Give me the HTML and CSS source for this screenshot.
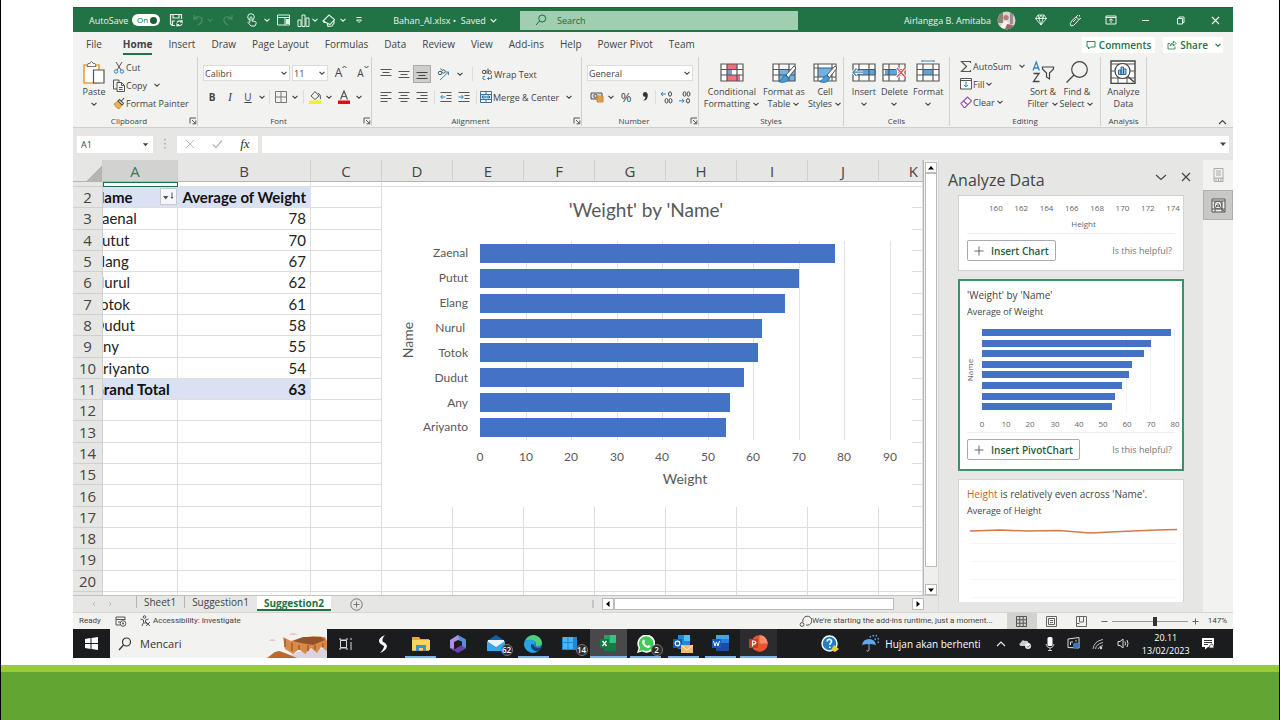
FILE: index.html
```html
<!DOCTYPE html>
<html lang="en">
<head>
<meta charset="utf-8">
<title>Bahan_AI.xlsx - Excel</title>
<link rel="stylesheet" href="styles.css">
</head>
<body>
<svg class="defs" aria-hidden="true">
  <symbol id="chev" viewBox="0 0 8 8"><path d="M1.5 2.8 4 5.2 6.5 2.8" fill="none" stroke="currentColor" stroke-width="1.1"/></symbol>
  <symbol id="launch" viewBox="0 0 8 8"><path d="M1 6.5V1H7M3 3 6.5 6.5M6.8 3.5V6.8H3.5" fill="none" stroke="#555" stroke-width="1"/></symbol>
  <symbol id="tri" viewBox="0 0 8 8"><path d="M1 2.5H7L4 6Z" fill="currentColor"/></symbol>
  <symbol id="gridicon" viewBox="0 0 24 20"><path d="M1 2H23V19H1Z" fill="#fff"/></symbol>
  <symbol id="gridlines" viewBox="0 0 24 20"><path d="M1 2H23V19H1ZM1 7.5H23M1 13H23M7 2V19M17 2V19" fill="none" stroke="#555" stroke-width="1.2"/></symbol>
  <symbol id="brush" viewBox="0 0 24 24"><path d="M22 6 14 15 16.5 17.5 24 8Z" fill="#fff" stroke="#555"/><path d="M13.5 15.5C10 15.5 11 20 6.5 21.5 11 23.5 16.5 22 16.5 18Z" fill="#4a9ad4" stroke="#2a6a9c" stroke-width=".8"/></symbol>
</svg>

<div class="window">
  <header class="titlebar">
    <div class="quick">
      <label for="autosave">AutoSave</label>
      <span class="toggle"><input type="checkbox" id="autosave" checked><span class="toggle-text">On</span><span class="knob"></span></span>
      <button aria-label="Save"><svg width="14" height="14" viewBox="0 0 14 14"><path d="M6 12.5H3L1.500 11V1.500H12.500V6M4 1.500V5H10V1.500M3.500 12V8H6M8 9.500A3 3 0 0 1 13 9V7M13 9H11M13 11A3 3 0 0 1 8 11.500V13.500M8 11.500H10" fill="none" stroke="#e4f2e9" stroke-width="1.200"/></svg></button>
      <button class="dim" aria-label="Undo"><svg width="12" height="12" viewBox="0 0 12 12"><path d="M2 1V5H6M2 5C5 1 11 3 10 7 9.500 9 8 10 6 11" fill="none" stroke="#fff" stroke-width="1.200"/></svg></button>
      <svg class="dim" width="8" height="8"><use href="#chev"/></svg>
      <button class="dim" aria-label="Redo"><svg width="12" height="12" viewBox="0 0 12 12"><path d="M10 1V5H6M10 5C7 1 1 3 2 7 2.500 9 4 10 6 11" fill="none" stroke="#fff" stroke-width="1.200"/></svg></button>
      <button aria-label="Touch mode"><svg width="12" height="14" viewBox="0 0 12 14"><circle cx="5" cy="4" r="3.300" fill="none" stroke="#e4f2e9"/><path d="M4 9V4.500Q5 3 6 4.500V8L9.500 8.500Q10.500 9 10 11L9 13H5L2 9.500Q2.500 8 4 9.500" fill="#217346" stroke="#e4f2e9"/></svg></button>
      <svg width="8" height="8"><use href="#chev"/></svg>
      <button aria-label="Pane"><svg width="13" height="12" viewBox="0 0 13 12"><path d="M.5 1H12.500V11H.500ZM.500 3.500H12.500M8 3.500V11" fill="none" stroke="#e4f2e9"/><path d="M9 5H12V10H9Z" fill="#e4f2e9"/></svg></button>
      <button aria-label="Chart"><svg width="13" height="13" viewBox="0 0 13 13"><path d="M1 12.500V6H4V12.500ZM5 12.500V1H8V12.500ZM9 12.500V4H12V12.500Z" fill="none" stroke="#e4f2e9"/></svg></button>
      <svg width="8" height="8"><use href="#chev"/></svg>
      <button aria-label="Shapes"><svg width="14" height="13" viewBox="0 0 14 13"><path d="M1 7 7 1 12.500 5.500 8 10.500 4 8.500ZM4 8.500H2V6M5 9 6 12.500 10 12 12 9V6" fill="none" stroke="#e4f2e9" stroke-width="1.100"/></svg></button>
      <svg width="8" height="8"><use href="#chev"/></svg>
      <button aria-label="Customize"><svg width="8" height="8" viewBox="0 0 8 8"><path d="M1.500 1.500H6.500M1.500 4 4 6.500 6.500 4Z" fill="none" stroke="#e4f2e9"/></svg></button>
    </div>
    <div class="doc-name">Bahan_AI.xlsx&nbsp;•&nbsp; Saved <svg width="9" height="9"><use href="#chev"/></svg></div>
    <label class="search"><svg width="12" height="12" viewBox="0 0 12 12"><circle cx="7.200" cy="4.500" r="3.500" fill="none" stroke="#1c6b3f"/><path d="M4.600 7 1 11" stroke="#1c6b3f"/></svg><input type="text" placeholder="Search" aria-label="Search"></label>
    <div class="account">
      <span>Airlangga B. Amitaba</span>
      <svg width="19" height="19" viewBox="0 0 19 19"><defs><clipPath id="av"><circle cx="9.500" cy="9.500" r="9"/></clipPath></defs><g clip-path="url(#av)"><path d="M0 0H19V19H0Z" fill="#dcd3d2"/><path d="M0 0H6V12H0Z" fill="#8f8078"/><path d="M13 2H16V13H13Z" fill="#9a8f90"/><circle cx="9" cy="6.500" r="2.600" fill="#b47f78"/><path d="M4 17Q5 10 9 10 12 10 13 17Z" fill="#f7f2f2"/><path d="M10 13 16 14 15 18H8Z" fill="#a1666a"/></g></svg>
    </div>
    <div class="win-buttons">
      <button aria-label="Premium"><svg width="12" height="12" viewBox="0 0 12 12"><path d="M3 1H9L11.500 4.500 6 11 .500 4.500ZM.500 4.500H11.500M3 1 4 4.500 6 11 8 4.500 9 1M4 4.500 6 1 8 4.500" fill="none" stroke="#e4f2e9" stroke-width=".9"/></svg></button>
      <button aria-label="Ink"><svg width="13" height="13" viewBox="0 0 13 13"><path d="M2 12Q0 10 3 6.500L7 3 10 5.500 7 9Q5 12 2 12ZM4 8 7 5M7 3 9 1M10 5.500 12 4M10.500 1V2.500" fill="none" stroke="#e4f2e9"/></svg></button>
      <button aria-label="Ribbon display"><svg width="12" height="10" viewBox="0 0 12 10"><path d="M1 1H11V9H1ZM1 2.500H11M6 8V4M4 5.500 6 3.800 8 5.500" fill="none" stroke="#e4f2e9"/></svg></button>
      <button aria-label="Minimize"><svg width="9" height="9" viewBox="0 0 9 9"><path d="M1 4.500H8" stroke="#e4f2e9"/></svg></button>
      <button aria-label="Restore"><svg width="9" height="9" viewBox="0 0 9 9"><path d="M1.500 2.500H6.500V8H1.500ZM3 2.500V1H8V6.500H6.500" fill="none" stroke="#e4f2e9"/></svg></button>
      <button aria-label="Close"><svg width="9" height="9" viewBox="0 0 9 9"><path d="M1 1 8 8M8 1 1 8" stroke="#fff" stroke-width="1.100"/></svg></button>
    </div>
  </header>

  <nav class="menu">
    <a href="#file" class="file">File</a><a href="#home" class="current">Home</a><a href="#insert">Insert</a><a href="#draw">Draw</a><a href="#layout">Page Layout</a><a href="#formulas">Formulas</a><a href="#data">Data</a><a href="#review">Review</a><a href="#view">View</a><a href="#addins">Add-ins</a><a href="#help">Help</a><a href="#pivot">Power Pivot</a><a href="#team">Team</a>
    <div class="menu-actions">
      <button><svg width="10" height="10" viewBox="0 0 10 10"><path d="M1 1.500H9V7H4.500L2.500 9V7H1Z" fill="none" stroke="#217346" stroke-width=".9"/></svg>Comments</button>
      <button class="share"><svg width="10" height="10" viewBox="0 0 10 10"><path d="M3 3.500H1V9H8V6.500M3 6Q3.500 3 6.500 3V1L9 3.500 6.500 6V4.500Q4.500 4.500 3 6Z" fill="none" stroke="#217346" stroke-width=".8"/></svg>Share<svg class="share-chev" width="8" height="8"><use href="#chev"/></svg></button>
    </div>
  </nav>

  <div class="ribbon">
    <section class="group g-clip">
      <div class="body clip">
        <button class="big"><svg width="24" height="24" viewBox="0 0 24 24"><path d="M2 5H17V23H2Z" fill="#fff" stroke="#e8a23d" stroke-width="1.600"/><path d="M5 6.500 6 3.500H8Q9.500-.5 11 3.500H13L14 6.500Z" fill="#fff" stroke="#777"/><path d="M11.500 10H22V23H11.500Z" fill="#fff" stroke="#555" stroke-width="1.200"/></svg>Paste<svg width="8" height="8"><use href="#chev"/></svg></button>
        <div class="stack">
          <button class="tool"><svg width="12" height="13" viewBox="0 0 12 13"><path d="M3 1 8 9M9 1 4 9" stroke="#555" fill="none"/><circle cx="3" cy="10.500" r="1.700" fill="none" stroke="#2f7fc1"/><circle cx="9" cy="10.500" r="1.700" fill="none" stroke="#2f7fc1"/></svg>Cut</button>
          <button class="tool"><svg width="12" height="13" viewBox="0 0 12 13"><path d="M4 10H.500V1H6V3M4 3.500H8.500L11.500 6.500V12.500H4ZM8.500 3.500V6.500H11.500M6 8.500H9.500M6 10.500H9.500" fill="none" stroke="#555"/></svg>Copy<svg class="push" width="8" height="8"><use href="#chev"/></svg></button>
          <button class="tool"><svg width="12" height="13" viewBox="0 0 12 13"><path d="M1 7 5 4 9 8 6 12Q3 11 1 7Z" fill="#f1b04c" stroke="#b87d25" stroke-width=".7"/><path d="M5 4 6.500 2.500 10.500 6.500 9 8ZM8.500 4 11 1" fill="#fff" stroke="#555" stroke-width="1.100"/></svg>Format Painter</button>
        </div>
      </div>
      <footer class="has-launch"><h2>Clipboard</h2><svg width="8" height="8"><use href="#launch"/></svg></footer>
    </section>

    <section class="group g-font">
      <div class="body rows">
        <div class="row font-1">
          <span class="combo"><select aria-label="Font"><option>Calibri</option></select><svg width="8" height="8"><use href="#chev"/></svg></span>
          <span class="combo"><select aria-label="Font size"><option>11</option></select><svg width="8" height="8"><use href="#chev"/></svg></span>
          <button class="grow" aria-label="Grow font">A<svg width="5" height="8" viewBox="0 0 5 8"><path d="M.5 3 2.500 1 4.500 3" fill="none" stroke="#444"/></svg></button>
          <button class="shrink" aria-label="Shrink font">A<svg width="5" height="8" viewBox="0 0 5 8"><path d="M.5 1 2.500 3 4.500 1" fill="none" stroke="#444"/></svg></button>
        </div>
        <div class="row font-2">
          <button class="glyph"><b>B</b></button><button class="glyph"><i>I</i></button><button class="glyph"><u>U</u></button><svg width="8" height="8"><use href="#chev"/></svg><hr>
          <button aria-label="Borders"><svg width="12" height="12" viewBox="0 0 12 12"><path d="M.5.500H11.500V11.500H.500ZM6 .500V11.500M.500 6H11.500" fill="none" stroke="#777"/></svg></button><svg width="8" height="8"><use href="#chev"/></svg><hr>
          <button aria-label="Fill color"><svg width="14" height="14" viewBox="0 0 14 14"><path d="M3 6 7 1.500 11 6 7 9.500ZM10 3Q13 4 12.500 9" fill="none" stroke="#555"/><path d="M1 10.500H13V14H1Z" fill="#f8f018"/></svg></button><svg width="8" height="8"><use href="#chev"/></svg>
          <button aria-label="Font color"><svg width="14" height="14" viewBox="0 0 14 14"><path d="M3.500 9.500 7 1 10.500 9.500M4.800 6.500H9.200" fill="none" stroke="#555" stroke-width="1.200"/><path d="M1 10.500H13V14H1Z" fill="#d9101c"/></svg></button><svg width="8" height="8"><use href="#chev"/></svg>
        </div>
      </div>
      <footer class="has-launch"><h2>Font</h2><svg width="8" height="8"><use href="#launch"/></svg></footer>
    </section>

    <section class="group g-align">
      <div class="body rows">
        <div class="row align-1">
          <button aria-label="Top align"><svg width="12" height="12" viewBox="0 0 12 12"><path d="M.5 1.500H11.500M2.500 4.500H9.500M.500 7.500H11.500" stroke="#555"/></svg></button>
          <button aria-label="Middle align"><svg width="12" height="12" viewBox="0 0 12 12"><path d="M.5 3.500H11.500M2.500 6.500H9.500M.500 9.500H11.500" stroke="#555"/></svg></button>
          <button class="pressed" aria-label="Bottom align"><svg width="12" height="12" viewBox="0 0 12 12"><path d="M.5 4.500H11.500M2.500 7.500H9.500M.500 10.500H11.500" stroke="#444"/></svg></button>
          <button aria-label="Orientation"><svg width="13" height="13" viewBox="0 0 13 13"><circle cx="3" cy="5" r="1.700" fill="none" stroke="#555"/><circle cx="6.500" cy="3.500" r="1.700" fill="none" stroke="#555"/><path d="M5 2 3 .500M4.500 6.500V4M3 12 11.500 4M8.500 4H11.500V7" fill="none" stroke="#3b87bd"/></svg></button>
          <svg width="8" height="8"><use href="#chev"/></svg><hr>
          <button class="tool"><svg width="12" height="13" viewBox="0 0 12 13"><circle cx="3" cy="4" r="1.700" fill="none" stroke="#555"/><path d="M5 2V6M7 .500V6" stroke="#555"/><circle cx="8.800" cy="4.300" r="1.600" fill="none" stroke="#555"/><path d="M4 8Q1 8 2 11 3 12 4.500 11.500M10.500 7V10.500H6.500M8 9 6.500 10.500 8 12" fill="none" stroke="#3b87bd"/></svg>Wrap Text</button>
        </div>
        <div class="row align-2">
          <button aria-label="Align left"><svg width="12" height="12" viewBox="0 0 12 12"><path d="M.5 1.500H11.500M.500 4.500H7.500M.500 7.500H11.500M.500 10.500H7.500" stroke="#555"/></svg></button>
          <button aria-label="Center"><svg width="12" height="12" viewBox="0 0 12 12"><path d="M.5 1.500H11.500M2.500 4.500H9.500M.500 7.500H11.500M2.500 10.500H9.500" stroke="#555"/></svg></button>
          <button aria-label="Align right"><svg width="12" height="12" viewBox="0 0 12 12"><path d="M.5 1.500H11.500M4.500 4.500H11.500M.500 7.500H11.500M4.500 10.500H11.500" stroke="#555"/></svg></button><hr>
          <button aria-label="Decrease indent"><svg width="12" height="12" viewBox="0 0 12 12"><path d="M.5 1.500H11.500M6.500 4.500H11.500M6.500 7.500H11.500M.500 10.500H11.500" stroke="#555"/><path d="M5.500 6H.800M2.500 4 .800 6 2.500 8" fill="none" stroke="#2f86c9"/></svg></button>
          <button aria-label="Increase indent"><svg width="12" height="12" viewBox="0 0 12 12"><path d="M.5 1.500H11.500M6.500 4.500H11.500M6.500 7.500H11.500M.500 10.500H11.500" stroke="#555"/><path d="M.5 6H5.200M3.500 4 5.200 6 3.500 8" fill="none" stroke="#2f86c9"/></svg></button><hr>
          <button class="tool"><svg width="12" height="12" viewBox="0 0 12 12"><path d="M.5.500H11.500V11.500H.500Z" fill="#fff" stroke="#44718f"/><path d="M.5 3.500H11.500V8.500H.500Z" fill="#bfe0f5" stroke="#44718f"/><path d="M6 .5V3.500M6 8.500V11.500" stroke="#44718f"/><path d="M2 6H10M3.500 4.700 2 6 3.500 7.300M8.500 4.700 10 6 8.500 7.300" fill="none" stroke="#1c6fae"/></svg>Merge &amp; Center</button><svg width="8" height="8"><use href="#chev"/></svg>
        </div>
      </div>
      <footer class="has-launch"><h2>Alignment</h2><svg width="8" height="8"><use href="#launch"/></svg></footer>
    </section>

    <section class="group g-num">
      <div class="body rows">
        <div class="row num-1"><span class="combo"><select aria-label="Number format"><option>General</option></select><svg width="8" height="8"><use href="#chev"/></svg></span></div>
        <div class="row num-2">
          <button aria-label="Currency"><svg width="14" height="12" viewBox="0 0 14 12"><path d="M1 2H12V8H1Z" fill="#ddd" stroke="#555"/><circle cx="5.500" cy="5" r="1.700" fill="none" stroke="#555"/><path d="M7 5H13V11H7Z" fill="#efb45e" stroke="#b9782a" stroke-width=".8"/><path d="M7 7H13M7 9H13" stroke="#b9782a" stroke-width=".7"/></svg></button><svg width="8" height="8"><use href="#chev"/></svg>
          <button class="pct">%</button>
          <button aria-label="Comma style"><svg width="8" height="12" viewBox="0 0 8 12"><path d="M4 1A2.400 2.400 0 1 0 4.500 5.800Q4.500 8.500 2 9.500 7 9.500 6.800 4 6.500 1 4 1Z" fill="#333"/></svg></button><hr>
          <button class="dec" aria-label="Increase decimal"><svg width="13" height="13" viewBox="0 0 13 13"><path d="M6 3H1M3 1 1 3 3 5" fill="none" stroke="#2f86c9"/><g fill="none" stroke="#444"><ellipse cx="10" cy="3" rx="1.500" ry="2.200"/><ellipse cx="6.500" cy="9.800" rx="1.500" ry="2.200"/><ellipse cx="10.500" cy="9.800" rx="1.500" ry="2.200"/></g></svg></button>
          <button class="dec" aria-label="Decrease decimal"><svg width="13" height="13" viewBox="0 0 13 13"><path d="M1 9.800H6M4 7.800 6 9.800 4 11.800" fill="none" stroke="#2f86c9"/><g fill="none" stroke="#444"><ellipse cx="6.500" cy="3" rx="1.500" ry="2.200"/><ellipse cx="10.500" cy="3" rx="1.500" ry="2.200"/><ellipse cx="10" cy="9.800" rx="1.500" ry="2.200"/></g></svg></button>
        </div>
      </div>
      <footer class="has-launch"><h2>Number</h2><svg width="8" height="8"><use href="#launch"/></svg></footer>
    </section>

    <section class="group g-styles">
      <div class="body bigs">
        <button class="big"><svg width="24" height="24" viewBox="0 0 24 24"><use href="#gridicon" y="2" width="24" height="20"/><path d="M7 4H17V9H7ZM7 15H20V21H7Z" fill="#f0717b"/><path d="M7 9H12V15H7Z" fill="#7a9fd0"/><use href="#gridlines" y="2" width="24" height="20"/></svg>Conditional<span>Formatting <svg width="8" height="8"><use href="#chev"/></svg></span></button>
        <button class="big"><svg width="24" height="24" viewBox="0 0 24 24"><use href="#gridicon" y="2" width="24" height="20"/><path d="M7 9H23V21H7Z" fill="#6fb4e6"/><use href="#gridlines" y="2" width="24" height="20"/><use href="#brush" width="24" height="24"/></svg>Format as<span>Table <svg width="8" height="8"><use href="#chev"/></svg></span></button>
        <button class="big"><svg width="24" height="24" viewBox="0 0 24 24"><use href="#gridicon" y="2" width="24" height="20"/><path d="M5 8H19V17H5Z" fill="#6fb4e6"/><path d="M1 4H23V21H1ZM1 8H23M5 4V21M19 4V21M1 17H23" fill="none" stroke="#555" stroke-width="1.100"/><use href="#brush" width="24" height="24"/></svg>Cell<span>Styles <svg width="8" height="8"><use href="#chev"/></svg></span></button>
      </div>
      <footer><h2>Styles</h2></footer>
    </section>

    <section class="group g-cells">
      <div class="body bigs">
        <button class="big"><svg width="24" height="24" viewBox="0 0 24 24"><use href="#gridicon" y="2" width="24" height="20"/><path d="M5 9.500H24V15H5Z" fill="#58a6dd"/><use href="#gridlines" y="2" width="24" height="20"/><path d="M11 12.200H1M4.500 8.500 1 12.200 4.500 16" fill="none" stroke="#fff" stroke-width="3"/><path d="M11 12.200H1M4.500 8.500 1 12.200 4.500 16" fill="none" stroke="#3b8cc7" stroke-width="1.300"/></svg>Insert<svg width="8" height="8"><use href="#chev"/></svg></button>
        <button class="big"><svg width="24" height="24" viewBox="0 0 24 24"><use href="#gridicon" y="2" width="24" height="20"/><path d="M3 9.500H15V15H3Z" fill="#58a6dd"/><use href="#gridlines" y="2" width="24" height="20"/><path d="M15 8 23 17M23 8 15 17" stroke="#fff" stroke-width="3"/><path d="M15 8 23 17M23 8 15 17" stroke="#e0505a" stroke-width="1.500"/></svg>Delete<svg width="8" height="8"><use href="#chev"/></svg></button>
        <button class="big"><svg width="24" height="24" viewBox="0 0 24 24"><use href="#gridicon" y="2" width="24" height="20"/><path d="M7 9.500H17V15H7Z" fill="#58a6dd"/><use href="#gridlines" y="2" width="24" height="20"/><path d="M6 1H18M6 0V2M18 0V2" stroke="#3b8cc7" stroke-width="1"/></svg>Format<svg width="8" height="8"><use href="#chev"/></svg></button>
      </div>
      <footer><h2>Cells</h2></footer>
    </section>

    <section class="group g-edit">
      <div class="body edit">
        <div class="stack">
          <button class="tool"><svg width="12" height="13" viewBox="0 0 12 13"><path d="M10.500 3V1.500H1.500L6.500 6.500 1.500 11.500H10.500V10" fill="none" stroke="#555" stroke-width="1.200"/></svg>AutoSum<svg class="push" width="8" height="8"><use href="#chev"/></svg></button>
          <button class="tool"><svg width="12" height="12" viewBox="0 0 12 12"><path d="M.5.500H11.500V11H.500ZM.500 2.500H11.500" fill="#fff" stroke="#555"/><path d="M6 3.500V9M4 7 6 9 8 7" fill="none" stroke="#2f86c9"/></svg>Fill<svg width="8" height="8"><use href="#chev"/></svg></button>
          <button class="tool"><svg width="12" height="12" viewBox="0 0 12 12"><path d="M1 7.500 7.500 1 11.500 5 5 11.500H4ZM3.500 5 8 9" fill="#fff" stroke="#9a4bb0" stroke-width="1.100"/></svg>Clear<svg width="8" height="8"><use href="#chev"/></svg></button>
        </div>
        <button class="big"><svg width="24" height="24" viewBox="0 0 24 24"><path d="M2 10.500 5.200 2 8.400 10.500M3.200 8H7.200" fill="none" stroke="#2f86c9" stroke-width="1.300"/><path d="M2.500 13.500H8L2.500 21.500H8.500" fill="none" stroke="#444" stroke-width="1.300"/><path d="M11.500 7H22.500V9L18.500 13V19L15.500 17V13L11.500 9Z" fill="none" stroke="#444" stroke-width="1.200"/></svg>Sort &amp;<span>Filter <svg width="8" height="8"><use href="#chev"/></svg></span></button>
        <button class="big"><svg width="24" height="24" viewBox="0 0 24 24"><circle cx="14.500" cy="9.500" r="7.800" fill="none" stroke="#444" stroke-width="1.200"/><path d="M9 15 1.500 22.500" stroke="#444" stroke-width="1.200"/></svg>Find &amp;<span>Select <svg width="8" height="8"><use href="#chev"/></svg></span></button>
      </div>
      <footer><h2>Editing</h2></footer>
    </section>

    <section class="group g-analysis">
      <div class="body bigs">
        <button class="big"><svg width="26" height="24" viewBox="0 0 26 24"><path d="M1 1H25V23.500H1Z" fill="#fff" stroke="#444" stroke-width="1.400"/><path d="M1 4H25M1 18H25M1 11H25M8 4V23.500M17 4V23.500" stroke="#555"/><circle cx="12.500" cy="11" r="7.500" fill="#fff" stroke="#444" stroke-width="1.200"/><path d="M18 16.500 24 22" stroke="#444" stroke-width="1.500"/><path d="M8.500 14.500V10H11V14.500ZM11 14.500V7H13.500V14.500ZM13.500 14.500V9H16V14.500Z" fill="#8ec3ea" stroke="#2a5e8c" stroke-width=".9"/></svg>Analyze<span>Data</span></button>
      </div>
      <footer><h2>Analysis</h2></footer>
    </section>
    <button class="collapse" aria-label="Collapse ribbon"><svg width="9" height="8" viewBox="0 0 9 8"><path d="M1 6 4.500 2.500 8 6" fill="none" stroke="#444" stroke-width="1.100"/></svg></button>
  </div>

  <div class="formula-bar">
    <span class="name-box"><input type="text" value="A1" aria-label="Name box"><svg width="7" height="7"><use href="#tri"/></svg></span>
    <svg class="dots" width="4" height="12" viewBox="0 0 4 12"><path d="M1 1H3V2.500H1ZM1 5H3V6.500H1ZM1 9H3V10.500H1Z" fill="#b5b5b3"/></svg>
    <div class="fx">
      <button aria-label="Cancel"><svg width="10" height="10" viewBox="0 0 10 10"><path d="M1 1 9 9M9 1 1 9" stroke="#bbb"/></svg></button>
      <button aria-label="Enter"><svg width="11" height="10" viewBox="0 0 11 10"><path d="M1 5.500 4 8.500 10 1.500" fill="none" stroke="#b5b5b3" stroke-width="1.200"/></svg></button>
      <button class="fx-label">fx</button>
    </div>
    <div class="formula"><input type="text" aria-label="Formula"><svg width="8" height="8"><use href="#tri"/></svg></div>
  </div>

  <main class="main">
    <div class="sheet">
      <div class="grid-area">
        <div class="grid">
          <table>
            <colgroup><col class="c-head"><col class="c-a"><col class="c-b"><col class="c-n"><col class="c-n"><col class="c-n"><col class="c-n"><col class="c-n"><col class="c-n"><col class="c-n"><col class="c-n"><col></colgroup>
            <thead><tr><th class="corner"></th><th class="sel">A</th><th>B</th><th>C</th><th>D</th><th>E</th><th>F</th><th>G</th><th>H</th><th>I</th><th>J</th><th class="k">K</th></tr></thead>
            <tbody>
              <tr class="first"><th></th><td class="active"></td><td></td><td></td><td colspan="8"></td></tr>
              <tr class="band"><th>2</th><td><span class="shift">Name</span><button class="filter" aria-label="Sort and filter"><svg width="13" height="12" viewBox="0 0 13 12"><path d="M1 5H6.500L3.700 8.500ZM8.500 6H11.500L10 8Z" fill="#555"/><path d="M10 1.500V7" stroke="#555"/></svg></button></td><td class="num">Average of Weight</td><td></td><td></td><td></td><td></td><td></td><td></td><td></td><td></td><td></td></tr>
              <tr><th>3</th><td><span class="shift">Zaenal</span></td><td class="num">78</td><td></td><td></td><td></td><td></td><td></td><td></td><td></td><td></td><td></td></tr>
              <tr><th>4</th><td><span class="shift">Putut</span></td><td class="num">70</td><td></td><td></td><td></td><td></td><td></td><td></td><td></td><td></td><td></td></tr>
              <tr><th>5</th><td><span class="shift">Elang</span></td><td class="num">67</td><td></td><td></td><td></td><td></td><td></td><td></td><td></td><td></td><td></td></tr>
              <tr><th>6</th><td><span class="shift">Nurul</span></td><td class="num">62</td><td></td><td></td><td></td><td></td><td></td><td></td><td></td><td></td><td></td></tr>
              <tr><th>7</th><td><span class="shift">Totok</span></td><td class="num">61</td><td></td><td></td><td></td><td></td><td></td><td></td><td></td><td></td><td></td></tr>
              <tr><th>8</th><td><span class="shift">Dudut</span></td><td class="num">58</td><td></td><td></td><td></td><td></td><td></td><td></td><td></td><td></td><td></td></tr>
              <tr><th>9</th><td><span class="shift">Any</span></td><td class="num">55</td><td></td><td></td><td></td><td></td><td></td><td></td><td></td><td></td><td></td></tr>
              <tr><th>10</th><td><span class="shift">Ariyanto</span></td><td class="num">54</td><td></td><td></td><td></td><td></td><td></td><td></td><td></td><td></td><td></td></tr>
              <tr class="band"><th>11</th><td><span class="shift">Grand Total</span></td><td class="num">63</td><td></td><td></td><td></td><td></td><td></td><td></td><td></td><td></td><td></td></tr>
              <tr><th>12</th><td></td><td></td><td></td><td></td><td></td><td></td><td></td><td></td><td></td><td></td><td></td></tr>
              <tr><th>13</th><td></td><td></td><td></td><td></td><td></td><td></td><td></td><td></td><td></td><td></td><td></td></tr>
              <tr><th>14</th><td></td><td></td><td></td><td></td><td></td><td></td><td></td><td></td><td></td><td></td><td></td></tr>
              <tr><th>15</th><td></td><td></td><td></td><td></td><td></td><td></td><td></td><td></td><td></td><td></td><td></td></tr>
              <tr><th>16</th><td></td><td></td><td></td><td></td><td></td><td></td><td></td><td></td><td></td><td></td><td></td></tr>
              <tr><th>17</th><td></td><td></td><td></td><td></td><td></td><td></td><td></td><td></td><td></td><td></td><td></td></tr>
              <tr><th>18</th><td></td><td></td><td></td><td></td><td></td><td></td><td></td><td></td><td></td><td></td><td></td></tr>
              <tr><th>19</th><td></td><td></td><td></td><td></td><td></td><td></td><td></td><td></td><td></td><td></td><td></td></tr>
              <tr><th>20</th><td></td><td></td><td></td><td></td><td></td><td></td><td></td><td></td><td></td><td></td><td></td></tr>
              <tr class="last"><th></th><td></td><td></td><td></td><td></td><td></td><td></td><td></td><td></td><td></td><td></td><td></td></tr>
            </tbody>
          </table>
          <svg class="chart" width="530" height="320" viewBox="0 0 530 320">
            <path d="M144.500 54V253M189.500 54V253M235.500 54V253M280.500 54V253M326.500 54V253M371.500 54V253M417.500 54V253M462.500 54V253M508.500 54V253" stroke="#e2e2e2"/>
            <text class="ch-title" x="264" y="30" text-anchor="middle">'Weight' by 'Name'</text>
            <g fill="#4472c4"><rect x="98" y="57" width="355" height="19"/><rect x="98" y="82" width="319" height="19"/><rect x="98" y="107" width="305" height="19"/><rect x="98" y="132" width="282" height="19"/><rect x="98" y="156" width="278" height="19"/><rect x="98" y="181" width="264" height="19"/><rect x="98" y="206" width="250" height="19"/><rect x="98" y="231" width="246" height="19"/></g>
            <g class="ch-label" text-anchor="end"><text x="86" y="70">Zaenal</text><text x="86" y="95">Putut</text><text x="86" y="120">Elang</text><text x="83" y="145">Nurul</text><text x="86" y="170">Totok</text><text x="86" y="195">Dudut</text><text x="86" y="220">Any</text><text x="86" y="244">Ariyanto</text></g>
            <g class="ch-label" text-anchor="middle"><text x="98" y="274">0</text><text x="144" y="274">10</text><text x="189" y="274">20</text><text x="235" y="274">30</text><text x="280" y="274">40</text><text x="326" y="274">50</text><text x="371" y="274">60</text><text x="417" y="274">70</text><text x="462" y="274">80</text><text x="508" y="274">90</text></g>
            <text class="ch-axis" x="303" y="297" text-anchor="middle">Weight</text>
            <text class="ch-axis" transform="translate(31 153) rotate(-90)" text-anchor="middle">Name</text>
          </svg>
        </div>
        <div class="vscroll"><button aria-label="Scroll up"><svg width="8" height="8" viewBox="0 0 8 8"><path d="M1 5.500 4 2 7 5.500Z"/></svg></button><span class="thumb"></span><button aria-label="Scroll down"><svg width="8" height="8" viewBox="0 0 8 8"><path d="M1 2.500 4 6 7 2.500Z"/></svg></button></div>
      </div>
      <div class="tabs">
        <svg class="tab-nav" width="24" height="8" viewBox="0 0 24 8"><path d="M5 2 3 4 5 6M19 2 21 4 19 6" fill="none" stroke="#b9b9b7"/></svg>
        <button class="tab">Sheet1</button><button class="tab">Suggestion1</button><button class="tab on">Suggestion2</button>
        <button class="add" aria-label="New sheet"><svg width="13" height="13" viewBox="0 0 13 13"><circle cx="6.500" cy="6.500" r="5.700" fill="none" stroke="#777"/><path d="M6.500 3.500V9.500M3.500 6.500H9.500" stroke="#777"/></svg></button>
        <span class="split"></span>
        <div class="hscroll"><button aria-label="Scroll left"><svg width="8" height="8" viewBox="0 0 8 8"><path d="M5.500 1 2 4 5.500 7Z"/></svg></button><span class="thumb"></span><button aria-label="Scroll right"><svg width="8" height="8" viewBox="0 0 8 8"><path d="M2.500 1 6 4 2.500 7Z"/></svg></button></div>
      </div>
    </div>

    <aside class="pane">
      <header><h1>Analyze Data</h1><button aria-label="Options"><svg width="12" height="12" viewBox="0 0 12 12"><path d="M1 4 6 8.500 11 4" fill="none" stroke="#444" stroke-width="1.100"/></svg></button><button aria-label="Close pane"><svg width="10" height="10" viewBox="0 0 10 10"><path d="M1 1 9 9M9 1 1 9" stroke="#444" stroke-width="1.200"/></svg></button></header>
      <div class="cards">
        <article class="card top">
          <div class="ticks"><span>160</span><span>162</span><span>164</span><span>166</span><span>168</span><span>170</span><span>172</span><span>174</span></div>
          <p class="axis">Height</p>
          <div class="actions"><button class="insert"><svg width="10" height="10" viewBox="0 0 10 10"><path d="M5 .5V9.500M.500 5H9.500" stroke="#666"/></svg>Insert Chart</button><a href="#helpful">Is this helpful?</a></div>
        </article>
        <article class="card chosen">
          <h3>'Weight' by 'Name'</h3>
          <p>Average of Weight</p>
          <svg class="mini" viewBox="0 0 216 110">
            <path d="M159.500 6V90M183.500 6V90M207.500 6V90" stroke="#f2f2f2"/>
            <g fill="#4472c4"><rect x="15" y="7" width="189" height="7"/><rect x="15" y="18" width="169" height="7"/><rect x="15" y="28" width="162" height="7"/><rect x="15" y="39" width="150" height="7"/><rect x="15" y="49" width="147" height="7"/><rect x="15" y="60" width="140" height="7"/><rect x="15" y="71" width="133" height="7"/><rect x="15" y="81" width="130" height="7"/></g>
            <g text-anchor="middle"><text x="15" y="105">0</text><text x="39" y="105">10</text><text x="63" y="105">20</text><text x="88" y="105">30</text><text x="112" y="105">40</text><text x="136" y="105">50</text><text x="160" y="105">60</text><text x="184" y="105">70</text><text x="208" y="105">80</text><text transform="translate(6 48) rotate(-90)">Name</text></g>
          </svg>
          <div class="actions"><button class="insert"><svg width="10" height="10" viewBox="0 0 10 10"><path d="M5 .5V9.500M.500 5H9.500" stroke="#666"/></svg>Insert PivotChart</button><a href="#helpful2">Is this helpful?</a></div>
        </article>
        <article class="card even">
          <h3><em>Height</em> is relatively even across 'Name'.</h3>
          <p>Average of Height</p>
          <svg class="mini" viewBox="0 0 216 80"><path d="M3 22.500H210M3 40.500H210M3 58.500H210M3 76.500H210" stroke="#f6f6f4"/><path d="M3 10 33 9 60 10 92 9.500 123 12 165 10 190 9 210 8.500" fill="none" stroke="#d5794b" stroke-width="1.500"/></svg>
        </article>
      </div>
    </aside>
    <div class="rail">
      <button aria-label="Notes"><svg width="11" height="14" viewBox="0 0 11 14"><path d="M1 .5H10V13.500H1ZM1 10H10M3 3H8M3 5H8M3 7H8M3 10V13M5.500 10V13M8 10V13" fill="none" stroke="#aaa"/></svg></button>
      <button class="on" aria-label="Analyze Data"><svg width="15" height="15" viewBox="0 0 15 15"><path d="M1 1H14V14H1ZM1 3H14M1 11H14M4 3V14M11 3V14" fill="#eee" stroke="#555"/><circle cx="7" cy="7" r="3.800" fill="#eee" stroke="#555"/><path d="M10 10 14 14M5.500 9V7M7 9V5M8.500 9V6.500" stroke="#555"/></svg></button>
    </div>
  </main>

  <div class="status">
    <span class="ready">Ready</span>
    <svg width="12" height="11" viewBox="0 0 12 11"><path d="M1 1H10V4M1 1V9H5M1 3.500H10M3 6H5" fill="none" stroke="#555"/><circle cx="8" cy="7.500" r="2.800" fill="none" stroke="#555"/><circle cx="8" cy="7.500" r="1" fill="#555"/></svg>
    <span class="access"><svg width="11" height="12" viewBox="0 0 11 12"><circle cx="4.500" cy="2" r="1.300" fill="none" stroke="#555"/><path d="M.5 4 3.500 5V7.500L2 11M8.500 4 5.500 5V7L7 9M3.500 8H5.500M6 7 10 11M10 7 6 11" fill="none" stroke="#555"/></svg>Accessibility: Investigate</span>
    <span class="starting"><svg width="13" height="12" viewBox="0 0 13 12"><path d="M4 7A4.500 4.500 0 1 1 7 10" fill="none" stroke="#555"/><circle cx="3" cy="9.500" r="1.900" fill="none" stroke="#555"/></svg>We're starting the add-ins runtime, just a moment...</span>
    <div class="views">
      <button class="on" aria-label="Normal view"><svg width="11" height="11" viewBox="0 0 11 11"><path d="M.5.500H10.500V10.500H.500ZM.500 3.800H10.500M.500 7.200H10.500M3.800.500V10.500M7.200.500V10.500" fill="none" stroke="#555"/></svg></button>
      <button aria-label="Page layout view"><svg width="11" height="11" viewBox="0 0 11 11"><path d="M.5.500H10.500V10.500H.500ZM2.500 2.500H8.500V8.500H2.500ZM4 4.500H7M4 6.500H7" fill="none" stroke="#666"/></svg></button>
      <button aria-label="Page break view"><svg width="11" height="11" viewBox="0 0 11 11"><path d="M.5.500H10.500V10.500H.500ZM3.500.500V6H7.500V.500M.500 7.500H3.500" fill="none" stroke="#666"/></svg></button>
    </div>
    <div class="zoom"><button aria-label="Zoom out"><svg width="7" height="7" viewBox="0 0 7 7"><path d="M.5 3.500H6.500" stroke="#666"/></svg></button><input type="range" min="0" max="100" value="58" aria-label="Zoom"><button aria-label="Zoom in"><svg width="7" height="7" viewBox="0 0 7 7"><path d="M.5 3.500H6.500M3.500.500V6.500" stroke="#666"/></svg></button><span>147%</span></div>
  </div>

  <div class="taskbar">
    <button class="start" aria-label="Start"><svg width="13" height="13" viewBox="0 0 13 13"><path d="M0 2 5.500 1V6H0ZM6.500 1 13 0V6H6.500ZM0 7H5.500V12L0 11ZM6.500 7H13V13L6.500 12Z" fill="#fff"/></svg></button>
    <label class="task-search"><svg width="14" height="14" viewBox="0 0 14 14"><circle cx="8.500" cy="5" r="4" fill="none" stroke="#333" stroke-width="1.200"/><path d="M5.500 8 1 13" stroke="#333" stroke-width="1.200"/></svg><input type="text" placeholder="Mencari" aria-label="Mencari">
      <svg width="60" height="27" viewBox="0 0 60 27"><path d="M20 27Q30 17 60 18V27Z" fill="#d9d3e4"/><path d="M0 27 8 21 12 20 18 22 30 27Z" fill="#b8692b"/><path d="M16 6 24 10 34 7 46 5 58 6 60 10V20L54 16 50 22 44 17 38 23 32 18 26 23 18 18Z" fill="#d98a4a"/><path d="M26 10 36 6 54 6 58 9 46 14 34 12Z" fill="#93532a"/><path d="M18 8V16M25 12V20M32 14V19M41 14V20M48 14V19M56 12V16" stroke="#a45f2d" stroke-width="1.500"/><path d="M2 10Q5 6 9 10ZM22 4Q26 0 31 4Z" fill="#e9c7c7"/></svg></label>
    <div class="apps">
      <button aria-label="Task view"><svg width="14" height="14" viewBox="0 0 14 14"><path d="M1 1V3H8V1M1 13V11H8V13M1.500 3.500H7.500V10.500H1.500ZM12 1V3M12 5V13" fill="none" stroke="#ddd"/></svg></button>
      <button aria-label="Shortcut"><svg width="12" height="18" viewBox="0 0 12 18"><path d="M8 0Q1 3 2 7 3 9 7 11 7 14 3 18 10 15 10 10.500 9 8 5.500 6.500 5 3 8 0Z" fill="#fff"/></svg></button>
      <button class="run" aria-label="File Explorer"><svg width="18" height="16" viewBox="0 0 18 16"><path d="M0 1H7L8.500 3H17V15H0Z" fill="#e9a92b"/><path d="M0 4H18V14H0Z" fill="#fbd45f"/><path d="M4 9H14V15H11V12H7V15H4Z" fill="#3f8fd6"/></svg></button>
      <button aria-label="Microsoft 365"><svg width="18" height="18" viewBox="0 0 18 18"><path d="M9 0 17 4.500V13L13 15.500V6.500L6 4Z" fill="#4f8fe0"/><path d="M9 0 1 5V13L5 15.500V7L10 4.500Z" fill="#b08fe8"/><path d="M1 13 9 18 17 13 12 10.500 6 14Z" fill="#6a3fb5"/></svg></button>
      <button aria-label="Mail"><svg width="18" height="17" viewBox="0 0 18 17"><path d="M0 6 9 0 18 6V16H0Z" fill="#1262a8"/><path d="M1 5H17V12H1Z" fill="#e9f5fd"/><path d="M0 6 9 12 18 6V16H0Z" fill="#3aa7e8"/></svg><span class="count">62</span></button>
      <button class="run" aria-label="Edge"><svg width="18" height="18" viewBox="0 0 18 18"><circle cx="9" cy="9" r="9" fill="#1c7cd0"/><path d="M1 6Q4 0 10 0 17 1 18 8 17 12 12 11 13 6 8 5 4 4 1 6Z" fill="#4ed07a"/><path d="M0 9Q2 4 8 5 12 7 11 9 9 8 8 10 7 15 14 16 9 19 4 16 0 13 0 9Z" fill="#26a5e4"/><path d="M7 9Q6 15 13 16.500 16 15.500 17 12.500 11 14 9.500 10Z" fill="#123f74"/></svg></button>
      <button aria-label="Phone"><svg width="17" height="16" viewBox="0 0 17 16"><path d="M0 1H15V14H0Z" fill="#1c86d8"/><path d="M1 1H5.500V6H1ZM6.500 1H11V6H6.500ZM1 7H5.500V13H1ZM6.500 7H11V13H6.500Z" fill="#49b5f4"/></svg><span class="count">14</span></button>
      <button class="run active" aria-label="Excel"><svg width="17" height="17" viewBox="0 0 17 17"><path d="M4 0H16V16H4Z" fill="#1fa463"/><path d="M10 0H16V8H10Z" fill="#33c481"/><path d="M4 8H16V16H4Z" fill="#157a43"/><path d="M0 4H9V13H0Z" fill="#107c41"/><path d="M2.500 6 6.500 11M6.500 6 2.500 11" stroke="#fff" stroke-width="1.300"/></svg></button>
      <button class="run" aria-label="WhatsApp"><svg width="18" height="18" viewBox="0 0 18 18"><path d="M0 18 1.500 13A9 9 0 1 1 5 16.500Z" fill="#fff"/><path d="M2 16 3 12.500A7.300 7.300 0 1 1 6 15.200Z" fill="#3fcb55"/><path d="M6 4.500 7.500 5 8 7 7.300 8Q8 10 10.500 11L11.500 10 13.500 11Q13 13.500 11 13 6 12 5 7Z" fill="#fff"/></svg><span class="count">2</span></button>
      <button class="run" aria-label="Outlook"><svg width="20" height="20" viewBox="0 0 20 20"><path d="M5 1H17V15H5Z" fill="#1f86d8"/><path d="M11 1H17V7H11Z" fill="#4dc0f5"/><path d="M0 5H9V14H0Z" fill="#0f5fb0"/><circle cx="4.500" cy="9.500" r="2.300" fill="none" stroke="#fff" stroke-width="1.200"/><path d="M8 11H20V19H8Z" fill="#f4b873"/><path d="M8 11 14 16 20 11" fill="none" stroke="#fff3e0"/></svg></button>
      <button class="run" aria-label="Word"><svg width="18" height="17" viewBox="0 0 18 17"><path d="M4 0H17V16H4Z" fill="#2b7cd3"/><path d="M4 8H17V16H4Z" fill="#184fa3"/><path d="M4 0H17V4H4Z" fill="#41a5ee"/><path d="M0 4H9V13H0Z" fill="#185abd"/><path d="M1.500 6 3 11 4.500 7 6 11 7.500 6" fill="none" stroke="#fff"/></svg></button>
      <button class="run lit" aria-label="PowerPoint"><svg width="19" height="18" viewBox="0 0 19 18"><circle cx="10.500" cy="8.500" r="8.300" fill="#e8562f"/><path d="M10.500.200A8.300 8.300 0 0 1 18.800 8.500H10.500Z" fill="#f58b6a"/><path d="M0 4H9V13H0Z" fill="#c43e1c"/><path d="M3.500 11.500V6H5Q7 6.500 7 7.800 6.500 9.300 3.500 9.300" fill="none" stroke="#fff" stroke-width="1.200"/></svg></button>
    </div>
    <div class="tray">
      <svg class="help" width="18" height="18" viewBox="0 0 18 18"><circle cx="8.500" cy="8.500" r="7.500" fill="#1f7fc2" stroke="#fff" stroke-width="1.500"/><path d="M6 6.500Q6.500 4 9 4.500 11.500 5.500 9.800 8 8.800 8.500 8.800 10M8.800 11.500V13" fill="none" stroke="#fff" stroke-width="1.600"/><path d="M13 10 18 14 14 17 10 15Z" fill="#f0c93a"/></svg>
      <span class="weather"><svg width="19" height="19" viewBox="0 0 19 19"><path d="M1 11Q2 5 8 5 14 5 15 11 8 9 1 11Z" fill="#5fa9ea"/><path d="M8 10V16Q7.500 18.500 5.500 16.500" fill="none" stroke="#aaa"/><path d="M9 2 9.500 3.500M12 1 12.500 2.500M15 1 15.500 2.500M14 4.500 14.500 6M17 4 17.500 5.500M17 7.500 17.500 9" stroke="#5fa9ea" stroke-width="1.400"/></svg>Hujan akan berhenti</span>
      <svg width="10" height="8" viewBox="0 0 10 8"><path d="M1 6 5 2 9 6" fill="none" stroke="#eee" stroke-width="1.100"/></svg>
      <svg width="14" height="12" viewBox="0 0 14 12"><path d="M2.500 8Q0 6 3 4.500 4 1 7 3 10 2 10.500 5 12.500 7 10 8Z" fill="#c9cdd0"/><circle cx="10" cy="8" r="3" fill="#eef2f4"/><path d="M8.500 8 10 9.500 12 7" fill="none" stroke="#4a90a0"/></svg>
      <svg width="10" height="14" viewBox="0 0 10 14"><rect x="2.500" y="0" width="5" height="9" rx="1.500" fill="#fff"/><path d="M1 7Q2 11 5 11 8 11 9 7M5 11V13.500M3 13.500H7" fill="none" stroke="#ddd" stroke-width=".9"/></svg>
      <svg width="13" height="13" viewBox="0 0 13 13"><path d="M1 2 12 .500V11L1 10.500ZM3.500 8V5H6M9 3V4.500" fill="none" stroke="#ddd"/><circle cx="9" cy="8.500" r="3" fill="#3478c6"/></svg>
      <svg width="12" height="12" viewBox="0 0 12 12"><path d="M1 11Q2 3 11 1.500M3.500 11Q4 6 11 4.500M6 11Q7 8 11 7.500" fill="none" stroke="#bbb"/><circle cx="9" cy="10" r="1.200" fill="#ddd"/></svg>
      <svg width="13" height="11" viewBox="0 0 13 11"><path d="M1 3.500H3L6 1V10L3 7.500H1ZM8 3.500Q9 5.500 8 7.500M10 2Q12 5.500 10 9" fill="none" stroke="#ddd"/></svg>
      <time>20.11<br>13/02/2023</time>
      <svg width="13" height="14" viewBox="0 0 13 14"><path d="M0 1H12V10H6L3 12.500V10H0Z" fill="#fff"/><path d="M2 3.500H10M2 5.500H10M2 7.500H6" stroke="#333"/><path d="M7.500 9Q10 5 11.500 9L12 11H7ZM9 12.500H10.500" fill="#fff" stroke="#333" stroke-width=".8"/></svg>
    </div>
  </div>
</div>
<div class="ground"></div>
</body>
</html>
```

FILE: styles.css
```css
* { box-sizing: border-box; }
body {
  margin: 0;
  min-height: 100vh;
  display: flex;
  flex-direction: column;
  background: #fff;
  border: solid #000;
  border-width: 0 1px;
  font-family: "Open Sans", "Noto Sans", sans-serif;
  font-size: 9px;
  color: #444;
}
.defs { display: none; }
svg { flex: none; }
button, input, select { font: inherit; color: inherit; background: none; border: 0; padding: 0; margin: 0; min-width: 0; outline: 0; }
button { display: flex; align-items: center; justify-content: center; white-space: nowrap; }
h1, h2, h3, p { margin: 0; font-weight: 400; }
hr { width: 1px; height: 14px; margin: 0 auto; border: 0; background: #dcdcda; }

.window { flex: 1; display: flex; flex-direction: column; margin: 7px 46px 7px 72px; background: #f2f2f0; }
.ground { height: 55px; background: #62a532; border-top: 7px solid #97cb3c; }

/* Title bar */
.titlebar { height: 25px; display: flex; align-items: center; background: #217346; color: #e8f4ec; padding-left: 16px; border-top: 1px solid #1b653c; }
.quick { display: grid; grid-template-columns: 42px 30px 30px 14px 10px 26px 22px 8px 24px 16px 8px 20px 8px 24px; align-items: center; justify-items: center; }
.quick label { justify-self: start; }
.dim { opacity: .2; }
.toggle { position: relative; width: 28px; height: 12px; border-radius: 6px; background: #fff; color: #217346; font-size: 8px; line-height: 12px; display: flex; align-items: center; justify-content: space-between; padding: 0 3px 0 5px; }
.toggle input { position: absolute; inset: 0; opacity: 0; }
.knob { width: 7px; height: 7px; border-radius: 50%; background: #1d5a39; }
.doc-name { width: 149px; display: flex; align-items: center; justify-content: center; white-space: nowrap; gap: 3px; }
.search { width: 278px; height: 19px; display: flex; align-items: center; gap: 10px; padding-left: 15px; background: #9fceb0; }
.search input { flex: 1; }
.search input::placeholder { color: #1c6b3f; opacity: 1; }
.account { margin-left: auto; display: flex; align-items: center; gap: 6px; }
.win-buttons { display: grid; grid-template-columns: repeat(6, 35px); margin-left: 7px; }
.win-buttons button { height: 24px; }

/* Menu */
.menu { height: 25px; display: flex; align-items: center; gap: 16px; padding: 1px 10px 0 13px; font-size: 10px; }
.menu a { color: #444; text-decoration: none; line-height: 17px; border-bottom: 2px solid transparent; white-space: nowrap; }
.menu .file { margin-right: 5px; }
.menu .current { font-weight: 700; border-color: #217346; }
.menu-actions { margin-left: auto; display: flex; gap: 8px; }
.menu-actions button { height: 16px; padding: 0 4px; gap: 3px; background: #fff; color: #217346; font-weight: 600; }
.menu-actions .share { padding-right: 1px; }
.share-chev { margin-left: 3px; }

/* Ribbon */
.ribbon { height: 71px; display: flex; border-bottom: 1px solid #cfcfcd; }
.group { flex: none; display: flex; flex-direction: column; border-right: 1px solid #d0d0ce; margin-bottom: 1px; }
.g-clip { width: 125px; }
.g-font { width: 174px; }
.g-align { width: 210px; }
.g-num { width: 117px; }
.g-styles { width: 145px; }
.g-cells { width: 106px; }
.g-edit { width: 151px; }
.g-analysis { width: 46px; }
.body { flex: 1; }
.group footer { display: grid; grid-template-columns: 1fr; align-items: center; }
.group .has-launch { grid-template-columns: 1fr 12px; justify-items: end; }
.group h2 { justify-self: stretch; font-size: 8px; line-height: 11px; text-align: center; }
.big { flex-direction: column; justify-content: flex-start; line-height: 12px; }
.big > svg:first-child { margin-bottom: 2px; }
.big > svg:last-child { margin-top: 2px; }
.big span { display: flex; align-items: center; gap: 2px; }
.bigs { display: flex; justify-content: center; gap: 3px; padding-top: 3px; }
.g-styles .bigs { padding-left: 4px; }
.g-cells .bigs { gap: 5px; padding-left: 2px; }
.clip { display: flex; padding: 1px 0 0 9px; gap: 7px; }
.clip .big { margin-top: 2px; }
.stack { display: grid; grid-auto-rows: 18px; align-content: start; }
.tool { justify-content: flex-start; gap: 1px; }
.push { margin-left: 5px; }
.edit { display: flex; padding: 0 0 0 10px; }
.edit .stack { width: 66px; }
.edit .big { margin-top: 3px; width: 34px; }
.rows { padding: 8px 5px 0; }
.row { display: grid; height: 16px; align-items: center; justify-items: center; }
.row + .row { height: 18px; margin-top: 7px; }
.combo { justify-self: stretch; height: 16px; display: flex; align-items: center; background: #fff; border: 1px solid #dcdcda; padding: 0 1px; }
.combo select { flex: 1; appearance: none; }
.font-1 { grid-template-columns: 87px 36px 22px 18px; column-gap: 2px; margin-right: -3px; }
.font-2 { grid-template-columns: 18px 18px 18px 9px 6px 18px 10px 6px 18px 10px 20px 10px; }
.glyph { font-size: 10px; }
.glyph i { font-family: "Liberation Serif", serif; font-size: 12px; }
.grow { font-size: 12px; align-items: flex-start; line-height: 16px; }
.shrink { font-size: 10px; align-items: flex-start; line-height: 16px; }
.align-1 { grid-template-columns: 18px 18px 18px 24px 9px 17px 60px; }
.align-2 { grid-template-columns: 18px 18px 18px 6px 18px 18px 7px 82px 14px; }
.align-1 .tool, .align-2 .tool { justify-self: start; }
.pressed { width: 18px; height: 18px; background: #cdcdcb; outline: 1px solid #aaa; outline-offset: -1px; }
.num-1 { grid-template-columns: 1fr; }
.num-2 { grid-template-columns: 20px 8px 22px 16px 4px 18px 18px; }
.pct { font-size: 13px; }
.collapse { margin-left: auto; padding: 0 6px 0 0; align-self: flex-end; height: 10px; }

/* Formula bar */
.formula-bar { height: 32px; display: flex; align-items: center; background: #e6e6e4; padding: 0 4px; }
.name-box { width: 76px; height: 17px; display: flex; align-items: center; background: #fff; padding: 0 4px; }
.name-box input { flex: 1; }
.dots { margin: 0 10px; }
.fx { width: 81px; height: 17px; display: flex; justify-content: space-around; background: #fff; }
.fx-label { font-family: "Liberation Serif", serif; font-style: italic; font-size: 13px; color: #333; }
.formula { flex: 1; height: 17px; display: flex; align-items: center; margin-left: 4px; background: #fff; padding-right: 2px; }
.formula input { flex: 1; }

/* Sheet */
.main { flex: 1; display: flex; min-height: 452px; background: #e6e6e4; }
.sheet { flex: 1; display: flex; flex-direction: column; min-width: 0; }
.grid-area { flex: 1; display: flex; }
.grid { flex: 1; position: relative; display: flex; overflow: hidden; border-right: 1px solid #b8b8b6; }
table { width: 100%; border-spacing: 0; table-layout: fixed; background: #fff; font-family: Lato, "Open Sans", sans-serif; font-size: 15px; line-height: 18px; color: #222; }
.c-head { width: 30px; }
.c-a { width: 75px; }
.c-b { width: 133px; }
.c-n { width: 71px; }
th { padding: 0; font: 400 15px/18px "Open Sans", sans-serif; color: #444; background: #e6e6e4; border: solid #cfcfcd; border-width: 0 1px 1px 0; }
thead th { height: 22px; border-bottom-color: #b5b5b3; }
thead .sel { background: #d2d2d0; color: #3a7857; padding-right: 10px; }
thead .k { text-align: right; padding-right: 4px; }
.corner { background: linear-gradient(135deg, #e6e6e4 70%, #b5b5b3 70%); }
td { padding: 0; overflow: hidden; white-space: nowrap; border: solid #dededc; border-width: 0 1px 1px 0; }
.first th, .first td { height: 5px; }
.first td.active { border: 1px solid #217346; }
.last th, .last td { height: 3px; border-bottom: 0; }
.num { text-align: right; padding-right: 4px; }
.band { font-weight: 700; color: #111; }
.band td:nth-child(2), .band td:nth-child(3) { background: #d9e1f2; border-right-color: #d9e1f2; }
.shift { margin-left: -10px; }
.filter { float: right; width: 17px; height: 17px; background: #f4f6fa; border: 1px solid #c4c8d0; }
.chart { position: absolute; left: 309px; top: 27px; background: #fff; font-family: Lato, "Open Sans", sans-serif; fill: #595959; }
.ch-title { font-size: 19px; }
.ch-label { font-size: 12px; }
.ch-axis { font-size: 14px; }
.vscroll { width: 14px; padding: 2px 1px 0; display: flex; flex-direction: column; background: #efefed; }
.vscroll button { height: 11px; background: #fff; border: 1px solid #bbb; }
.vscroll .thumb { flex: 1; margin-bottom: 17px; background: #fff; border: 1px solid #bbb; }
.tabs { height: 17px; display: flex; align-items: flex-start; border-top: 1px solid #c2c2c0; padding-right: 14px; font-size: 10px; }
.tab-nav { align-self: center; margin: 0 22px 0 17px; }
.tab { height: 12px; line-height: 12px; border-left: 1px solid #b5b5b3; padding: 0 8px 0 7px; }
.tab.on { height: 15px; padding: 0 7px; background: #fff; color: #217346; font-weight: 700; border: 0; border-bottom: 2px solid #217346; }
.add { margin-left: 19px; align-self: center; }
.split { width: 2px; height: 8px; align-self: center; background: #c5c5c3; margin-left: auto; }
.hscroll { width: 322px; height: 12px; align-self: center; margin-left: 8px; display: flex; }
.hscroll button { width: 12px; background: #fff; border: 1px solid #bbb; }
.hscroll .thumb { flex: 1; margin-right: 18px; background: #fff; border: 1px solid #bbb; }

/* Analyze pane */
.pane { width: 265px; display: flex; flex-direction: column; padding-bottom: 10px; border-left: 1px solid #dadad8; }
.pane header { height: 35px; display: flex; align-items: flex-start; gap: 14px; padding: 11px 12px 0 9px; }
.pane header button { height: 12px; }
.pane h1 { flex: 1; font-size: 16px; line-height: 18px; }
.cards { flex: 1; margin: 0 19px; display: flex; flex-direction: column; gap: 8px; border-top: 1px solid #cfcfcd; }
.card { background: #fff; border: 1px solid #d4d4d2; padding: 0 8px; }
.card.top { border-top: 0; height: 75px; padding: 6px 3px 0 24px; }
.ticks { display: flex; justify-content: space-between; font-size: 8px; line-height: 11px; color: #666; padding: 0 0 0 6px; }
.axis { font-size: 8px; color: #666; text-align: center; padding-left: 4px; }
.card .axis { line-height: 12px; margin-top: 5px; }
.top .actions { margin: 3px 5px 0 -16px; }
.actions { display: flex; align-items: center; justify-content: space-between; border-top: 1px solid #eee; padding-top: 6px; }
.insert { height: 21px; padding: 0 6px; gap: 7px; border: 1px solid #aaa; border-radius: 2px; background: #fff; color: #1f5c3b; font-size: 10px; font-weight: 600; }
.actions a { color: #777; text-decoration: none; padding-right: 3px; }
.chosen { border: 2px solid #3f8f68; height: 192px; padding: 6px 7px 0; }
.card h3 { font-size: 10px; line-height: 16px; }
.card p { line-height: 14px; }
.chosen p, .even p { margin-top: 2px; font-size: 9px; }
.card em { font-style: normal; color: #c8622f; }
.mini { display: block; width: calc(100% + 8px); margin-top: 3px; overflow: visible; font-size: 8px; fill: #666; }
.even { flex: 1; padding-top: 6px; border-bottom: 0; }
.rail { width: 30px; background: #f2f2f0; }
.rail button { width: 30px; height: 30px; }
.rail .on { background: #c8c8c6; border: 1px solid #b0b0ae; }

/* Status bar */
.status { height: 17px; display: flex; align-items: center; padding: 0 6px; border-top: 1px solid #d5d5d3; font-family: Roboto, "Open Sans", sans-serif; font-size: 8px; line-height: 10px; white-space: nowrap; }
.ready { width: 36px; }
.access { display: flex; align-items: center; gap: 2px; margin-left: 13px; }
.starting { margin-left: auto; display: flex; align-items: center; }
.views { display: flex; margin-left: 14px; align-self: stretch; }
.views button { width: 30px; }
.views .on { background: #d2d2d0; }
.zoom { display: flex; align-items: center; margin-left: 4px; }
.zoom input { appearance: none; width: 76px; height: 9px; margin: 0 4px; background: linear-gradient(#999, #999) center / 100% 1px no-repeat; }
.zoom input::-webkit-slider-thumb { appearance: none; width: 4px; height: 9px; background: #333; }
.zoom span { margin-left: 9px; }

/* Taskbar */
.taskbar { height: 29px; display: flex; background: #1b1c1e; color: #fff; }
.start { width: 37px; }
.task-search { width: 217px; display: flex; align-items: center; gap: 8px; padding-left: 8px; background: #f2f2f0; color: #333; font-size: 11px; }
.task-search input { flex: 1; }
.task-search input::placeholder { color: #333; opacity: 1; }
.task-search svg:last-child { align-self: flex-end; }
.apps { width: 450px; display: grid; grid-template-columns: repeat(12, 1fr); }
.apps button { position: relative; }
.run { background: linear-gradient(#7fb2e5, #7fb2e5) bottom / 31px 2px no-repeat; }
.run.active { background: linear-gradient(#7fb2e5, #7fb2e5) bottom / 100% 2px no-repeat #47494b; }
.run.lit { background: linear-gradient(#7fb2e5, #7fb2e5) bottom / 100% 2px no-repeat #2c2c2e; }
.count { position: absolute; right: 2px; bottom: 2px; min-width: 12px; height: 12px; border-radius: 6px; border: 1px solid #777; background: #2b2c2e; font-size: 8px; line-height: 10px; font-weight: 600; }
.tray { flex: 1; display: flex; align-items: center; justify-content: space-between; padding: 0 18px 0 44px; white-space: nowrap; }
.help { margin-right: 10px; }
.weather { display: flex; align-items: center; gap: 5px; margin-right: 3px; font-size: 10px; }
.tray time { font-size: 9px; line-height: 13px; text-align: center; }
```
